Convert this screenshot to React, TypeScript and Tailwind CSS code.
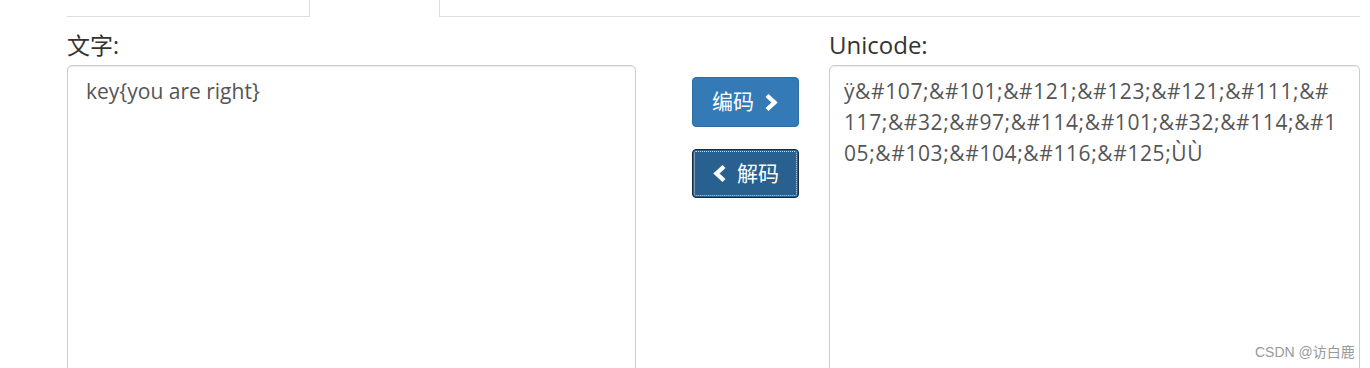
import React from "react";

const font = { fontFamily: '"Open Sans", "Noto Sans CJK SC", sans-serif' };

function Chevron({ dir }: { dir: "left" | "right" }) {
  return (
    <svg width="15" height="19" viewBox="0 0 15 19" className="shrink-0">
      {dir === "right" ? (
        <path d="M3 2.5 L10.5 9.5 L3 16.5" fill="none" stroke="white" strokeWidth="4.4" strokeLinejoin="miter" />
      ) : (
        <path d="M12 2.5 L4.5 9.5 L12 16.5" fill="none" stroke="white" strokeWidth="4.4" strokeLinejoin="miter" />
      )}
    </svg>
  );
}

export default function App() {
  const unicodeLines = [
    "ÿ&#107;&#101;&#121;&#123;&#121;&#111;&#",
    "117;&#32;&#97;&#114;&#101;&#32;&#114;&#1",
    "05;&#103;&#104;&#116;&#125;ÙÙ",
  ];

  return (
    <div className="relative h-[368px] w-[1370px] overflow-hidden bg-white text-[#333]" style={font}>
      {/* tabs strip */}
      <div className="ml-[67px] flex h-[17px] w-[1293px]">
        <div className="w-[243px] border-b border-r border-[#ddd]" />
        <div className="w-[129px]" />
        <div className="flex-1 border-b border-l border-[#ddd]" />
      </div>

      <div className="ml-[67px] flex">
        <div className="w-[569px]">
          <div className="mt-[12px] h-[36px] text-[23px] leading-[32px]">文字:</div>
          <div className="h-[320px] rounded-[5px] border border-[#ccc] pl-[18px] pt-[10px] text-[21px] leading-[31px] text-[#555] shadow-[inset_0_1px_1px_rgba(0,0,0,0.075)]">
            key{"{"}you are right{"}"}
          </div>
        </div>

        <div className="ml-[56px] mt-[60px] flex w-[107px] flex-col gap-[22px]">
          <button className="flex h-[50px] items-center justify-center gap-[10px] rounded-[4px] border border-[#2e6da4] bg-[#337ab7] text-[21px] text-white">
            <span>编码</span>
            <Chevron dir="right" />
          </button>
          <button className="flex h-[49px] items-center justify-center gap-[10px] rounded-[4px] border border-[#122b40] bg-[#286090] text-[21px] text-white outline-1 outline-dotted outline-offset-[-3px] outline-[#cfd8e0]">
            <Chevron dir="left" />
            <span>解码</span>
          </button>
        </div>

        <div className="ml-[30px] w-[531px]">
          <div className="mt-[12px] h-[36px] text-[24px] leading-[32px]">Unicode:</div>
          <div className="h-[320px] rounded-[5px] border border-[#ccc] pl-[14px] pt-[10px] text-[21px] leading-[31px] tracking-[0.6px] text-[#555] shadow-[inset_0_1px_1px_rgba(0,0,0,0.075)]">
            {unicodeLines.map((l) => (
              <div key={l} className="whitespace-nowrap">{l}</div>
            ))}
          </div>
        </div>
      </div>

      <div className="absolute left-[1255px] top-[342px] text-[14px] text-[#999]" style={{ fontFamily: '"Liberation Sans", "Noto Sans CJK SC", sans-serif' }}>
        CSDN @访白鹿
      </div>
    </div>
  );
}
